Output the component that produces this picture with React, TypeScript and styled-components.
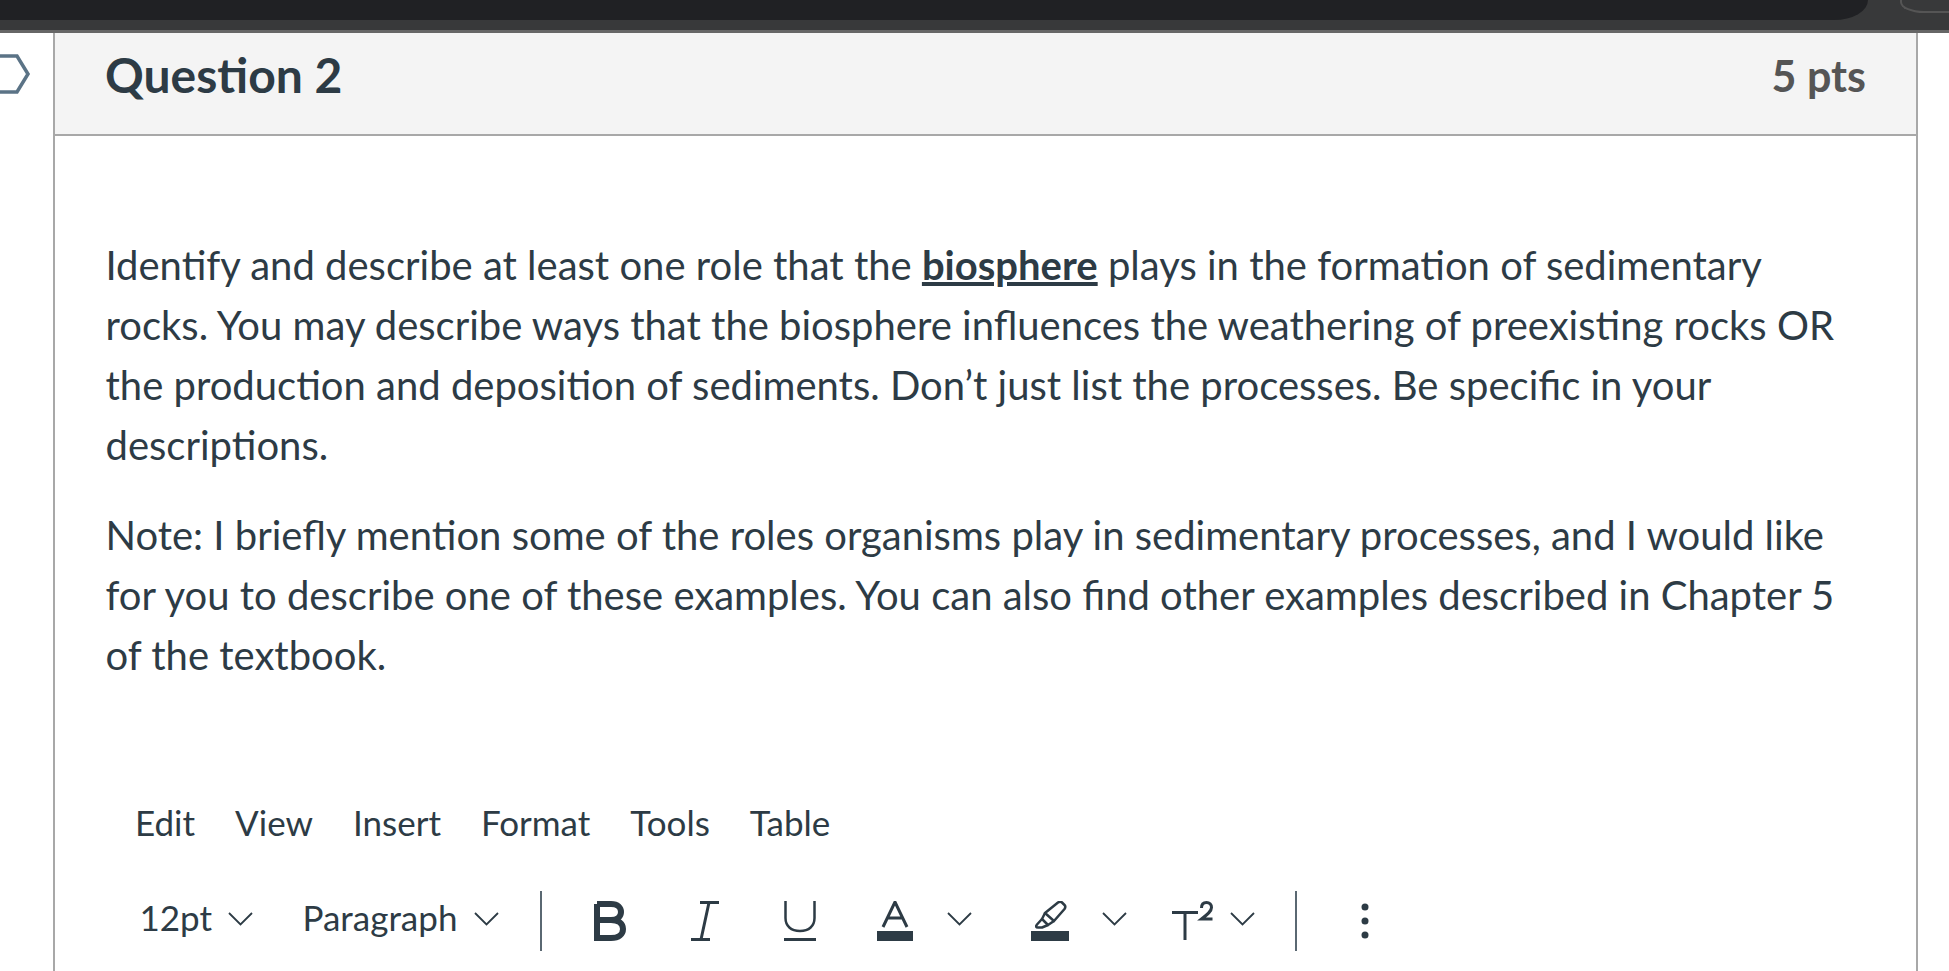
import styled, { createGlobalStyle } from "styled-components";

const Global = createGlobalStyle`
  html, body { margin: 0; padding: 0; background: #fff; overflow: hidden; }
  body { font-family: Lato, "Open Sans", sans-serif; color: #2d3b45; }
`;

const Page = styled.div`
  width: 1949px;
  height: 971px;
  overflow: hidden;
  display: flex;
  flex-direction: column;
`;

const BrowserBar = styled.div`
  height: 30px;
  flex: none;
  background: #38393a;
  border-bottom: 3px solid #666;
  display: flex;
  overflow: hidden;
`;

const ActiveTab = styled.div`
  width: 1868px;
  height: 20px;
  flex: none;
  background: #202124;
  border-bottom-right-radius: 34px 20px;
`;

const NextTab = styled.div`
  width: 120px;
  height: 11px;
  flex: none;
  margin-left: 32px;
  border: 2px solid #555;
  border-top: none;
  border-right: none;
  border-bottom-left-radius: 24px 11px;
`;

const Body = styled.div`
  flex: 1;
  display: flex;
  align-items: flex-start;
`;

const Gutter = styled.div`
  width: 53px;
  flex: none;
  padding-top: 21px;
`;

const Card = styled.div`
  width: 1861px;
  height: 950px;
  flex: none;
  border-left: 2px solid #a8a8a8;
  border-right: 2px solid #a8a8a8;
`;

const Header = styled.div`
  height: 103px;
  box-sizing: border-box;
  background: #f4f4f4;
  border-bottom: 2px solid #a8a8a8;
  display: flex;
  align-items: center;
  justify-content: space-between;
  padding: 0 50px 17px 50px;
`;

const Title = styled.h2`
  margin: 0;
  font-size: 48px;
  font-weight: 700;
  line-height: 1;
`;

const Points = styled.div`
  font-size: 43px;
  font-weight: 700;
  color: #555;
`;

const Content = styled.div`
  padding: 99px 50px 0 50.5px;
  font-size: 40px;
  line-height: 60px;
`;

const Para = styled.p`
  margin: 0 0 30px;
`;

const Strong = styled.strong`
  text-decoration: underline;
`;

const MenuBar = styled.div`
  display: flex;
  gap: 40px;
  margin: 117px 0 0 29.5px;
  font-size: 35px;
  line-height: 40px;
`;

const Toolbar = styled.div`
  display: flex;
  align-items: center;
  margin: 49px 0 0 34px;
  height: 60px;
  font-size: 35px;
  line-height: 52px;
`;

const Slot = styled.div<{ $w: number; $ml?: number }>`
  width: ${(p) => p.$w}px;
  margin-left: ${(p) => p.$ml ?? 0}px;
  flex: none;
  display: flex;
  align-items: center;
  justify-content: space-between;
`;

const Label = styled.span`
  padding-bottom: 8px;
`;

const Divider = styled.div`
  width: 2px;
  height: 60px;
  flex: none;
  background: #5a6872;
`;

const ChevronIcon = styled.svg`
  margin-bottom: 4px;
  flex: none;
`;

const Chevron = () => (
  <ChevronIcon width="25" height="14" viewBox="0 0 25 14" fill="none" stroke="#2d3b45" strokeWidth="1.800">
    <path d="M1 1l11.500 11.500L24 1" />
  </ChevronIcon>
);

const Hexagon = () => (
  <svg width="32" height="40" viewBox="0 0 32 40" fill="none" stroke="#5b7386" strokeWidth="3.500" style={{ display: "block" }}>
    <path d="M-4 2H17L28 20 17 38H-4" />
  </svg>
);

const IconBold = () => (
  <svg width="32" height="40" viewBox="0 0 32 40" fill="none" stroke="#2d3b45" strokeWidth="6">
    <path d="M3 3H17C24 3 27 7 27 11C27 15 24 19 17 19H3M17 19C25 19 29 23 29 28C29 33 25 37 17 37H3V3" />
  </svg>
);

const IconItalic = () => (
  <svg width="28" height="40" viewBox="0 0 28 40" fill="none" stroke="#2d3b45" strokeWidth="3">
    <path d="M9 1.500H28M0 38.500H19M18 1.500L10 38.500" />
  </svg>
);

const IconUnderline = () => (
  <svg width="32" height="40" viewBox="0 0 32 40" fill="none" stroke="#2d3b45" strokeWidth="2.500">
    <path d="M1.500 0V17C1.500 25 7 30 16 30S30.500 25 30.500 17V0" />
    <path d="M0 38.500H32" strokeWidth="3" />
  </svg>
);

const IconTextColor = () => (
  <svg width="36" height="40" viewBox="0 0 36 40" fill="none" stroke="#2d3b45" strokeWidth="3">
    <path d="M6 26L18 1 30 26M9.500 17H26.500" />
    <rect x="0" y="30" width="36" height="10" fill="#2d3b45" stroke="none" />
  </svg>
);

const IconHighlight = () => (
  <svg width="38" height="40" viewBox="0 0 38 40" fill="none" stroke="#2d3b45" strokeWidth="2.500" strokeLinejoin="round">
    <path d="M14 12L27 1.500C28.500 .5 30 .5 31 1.500L33.500 4C34.500 5 34.500 6.500 33.500 8L23 20Z" />
    <path d="M14 12L11 18 17 24 23 20" />
    <path d="M11 18L6 23.500C4.500 25.500 5 26.500 7 26.500H11L17 24" />
    <rect x="0" y="30" width="38" height="10" fill="#2d3b45" stroke="none" />
  </svg>
);

const IconSuperscript = () => (
  <svg width="41" height="40" viewBox="0 0 41 40" fill="none" stroke="#2d3b45" strokeWidth="3">
    <path d="M0 11.500H26M13 11.500V39" />
    <path d="M29.500 7C29.500 3.500 31.500 1.500 34.500 1.500S39.500 3.500 39.500 6.500C39.500 10 36 13 29.500 18H40.500" />
  </svg>
);

const IconMore = () => (
  <svg width="8" height="36" viewBox="0 0 8 36" fill="#2d3b45">
    <circle cx="4" cy="4" r="3.500" />
    <circle cx="4" cy="18" r="3.500" />
    <circle cx="4" cy="32" r="3.500" />
  </svg>
);

export default function App() {
  return (
    <Page>
      <Global />
      <BrowserBar>
        <ActiveTab />
        <NextTab />
      </BrowserBar>
      <Body>
        <Gutter>
          <Hexagon />
        </Gutter>
        <Card>
          <Header>
            <Title>Question 2</Title>
            <Points>5 pts</Points>
          </Header>
          <Content>
            <Para>
              Identify and describe at least one role that the <Strong>biosphere</Strong> plays in the formation of sedimentary
              rocks. You may describe ways that the biosphere influences the weathering of preexisting rocks OR
              the production and deposition of sediments. Don’t just list the processes. Be specific in your
              descriptions.
            </Para>
            <Para>
              Note: I briefly mention some of the roles organisms play in sedimentary processes, and I would like
              for you to describe one of these examples. You can also find other examples described in Chapter 5
              of the textbook.
            </Para>
            <MenuBar>
              <span>Edit</span>
              <span>View</span>
              <span>Insert</span>
              <span>Format</span>
              <span>Tools</span>
              <span>Table</span>
            </MenuBar>
            <Toolbar>
              <Slot $w={113}>
                <Label>12pt</Label>
                <Chevron />
              </Slot>
              <Slot $w={196} $ml={50}>
                <Label>Paragraph</Label>
                <Chevron />
              </Slot>
              <Slot $w={2} $ml={41}>
                <Divider />
              </Slot>
              <Slot $w={32} $ml={52}>
                <IconBold />
              </Slot>
              <Slot $w={28} $ml={65}>
                <IconItalic />
              </Slot>
              <Slot $w={32} $ml={65}>
                <IconUnderline />
              </Slot>
              <Slot $w={95} $ml={61}>
                <IconTextColor />
                <Chevron />
              </Slot>
              <Slot $w={96} $ml={59}>
                <IconHighlight />
                <Chevron />
              </Slot>
              <Slot $w={83} $ml={45}>
                <IconSuperscript />
                <Chevron />
              </Slot>
              <Slot $w={2} $ml={40}>
                <Divider />
              </Slot>
              <Slot $w={8} $ml={64}>
                <IconMore />
              </Slot>
            </Toolbar>
          </Content>
        </Card>
      </Body>
    </Page>
  );
}
